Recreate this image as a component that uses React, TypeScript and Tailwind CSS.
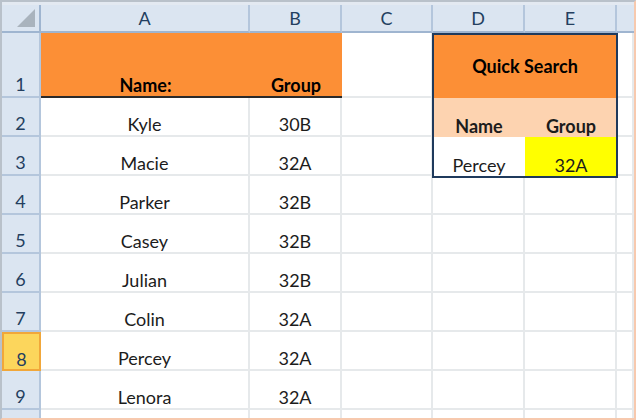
import React from "react";

const names = [
  ["Kyle", "30B"],
  ["Macie", "32A"],
  ["Parker", "32B"],
  ["Casey", "32B"],
  ["Julian", "32B"],
  ["Colin", "32A"],
  ["Percey", "32A"],
  ["Lenora", "32A"],
];

const grid = "border-r-2 border-b-2 border-[#e6e9eb]";
const rowHead =
  "flex items-end justify-center pb-[2px] bg-[#dbe5f1] border-r-2 border-b-2 border-[#b4c6dc] text-[#243f60]";
const cellText = "flex items-end justify-center pb-[1px] text-[#1c1c1c]";

function ColHead({ label, last }: { label?: string; last?: boolean }) {
  return (
    <div
      className={`flex items-center justify-center bg-[#dbe5f1] border-b-2 border-[#9fb5d0] text-[#243f60] ${
        last ? "" : "border-r-2 border-r-[#b4c6dc]"
      }`}
    >
      {label}
    </div>
  );
}

export default function App() {
  return (
    <div className="w-[636px] h-[420px] overflow-hidden bg-white border-t-2 border-l-2 border-[#b9c1ca] border-r-2 border-r-[#f7c9ae] border-b-2 border-b-[#f7c9ae] font-['Lato',sans-serif] text-[18px] leading-[20px]">
      <div className="h-[3px] bg-[#e3e9f1]" />
      <div className="relative grid grid-cols-[39px_209px_92px_91px_92px_92px_1fr] grid-rows-[28px_65px_39px_39px_39px_39px_39px_39px_39px_39px_20px]">
        {/* column headers */}
        <div className="flex items-end justify-end pr-[4px] pb-[4px] bg-[#dbe5f1] border-r-2 border-b-2 border-[#9fb5d0]">
          <svg width="18" height="18" viewBox="0 0 18 18">
            <polygon points="18,0 18,18 0,18" fill="#a9b3bd" />
          </svg>
        </div>
        <ColHead label="A" />
        <ColHead label="B" />
        <ColHead label="C" />
        <ColHead label="D" />
        <ColHead label="E" />
        <ColHead last />

        {/* row 1 */}
        <div className={rowHead}>1</div>
        <div className="flex items-end justify-center pb-[1px] bg-[#fc8f36] border-b-2 border-[#2a2a2a] font-bold">
          Name:
        </div>
        <div className="flex items-end justify-center pb-[1px] bg-[#fc8f36] border-b-2 border-[#2a2a2a] font-bold">
          Group
        </div>
        <div className={grid} />
        <div className="col-span-2 flex items-center justify-center bg-[#fc8f36] font-bold">
          Quick Search
        </div>
        <div className={grid} />

        {names.map(([n, g], i) => {
          const r = i + 2;
          return (
            <React.Fragment key={r}>
              <div
                className={
                  r === 8
                    ? "flex items-end justify-center pb-[0px] bg-[#fcd65c] border-2 border-[#f1a73a] text-[#243f60]"
                    : rowHead
                }
              >
                {r}
              </div>
              <div className={`${cellText} ${grid}`}>{n}</div>
              <div className={`${cellText} ${grid}`}>{g}</div>
              <div className={grid} />
              {r === 2 ? (
                <>
                  <div className={`${cellText} bg-[#fdd3b0] font-bold`}>Name</div>
                  <div className={`${cellText} bg-[#fdd3b0] font-bold`}>Group</div>
                </>
              ) : r === 3 ? (
                <>
                  <div className={`${cellText} bg-white`}>Percey</div>
                  <div className={`${cellText} bg-[#ffff00]`}>32A</div>
                </>
              ) : (
                <>
                  <div className={grid} />
                  <div className={grid} />
                </>
              )}
              <div className={grid} />
            </React.Fragment>
          );
        })}

        {/* row 10 */}
        <div className={rowHead} />
        <div className={grid} />
        <div className={grid} />
        <div className={grid} />
        <div className={grid} />
        <div className={grid} />
        <div className={grid} />

        {/* quick search outline */}
        <div className="pointer-events-none absolute left-[430px] top-[28px] w-[186px] h-[145px] border-2 border-[#1f3a5c]" />
      </div>
    </div>
  );
}
